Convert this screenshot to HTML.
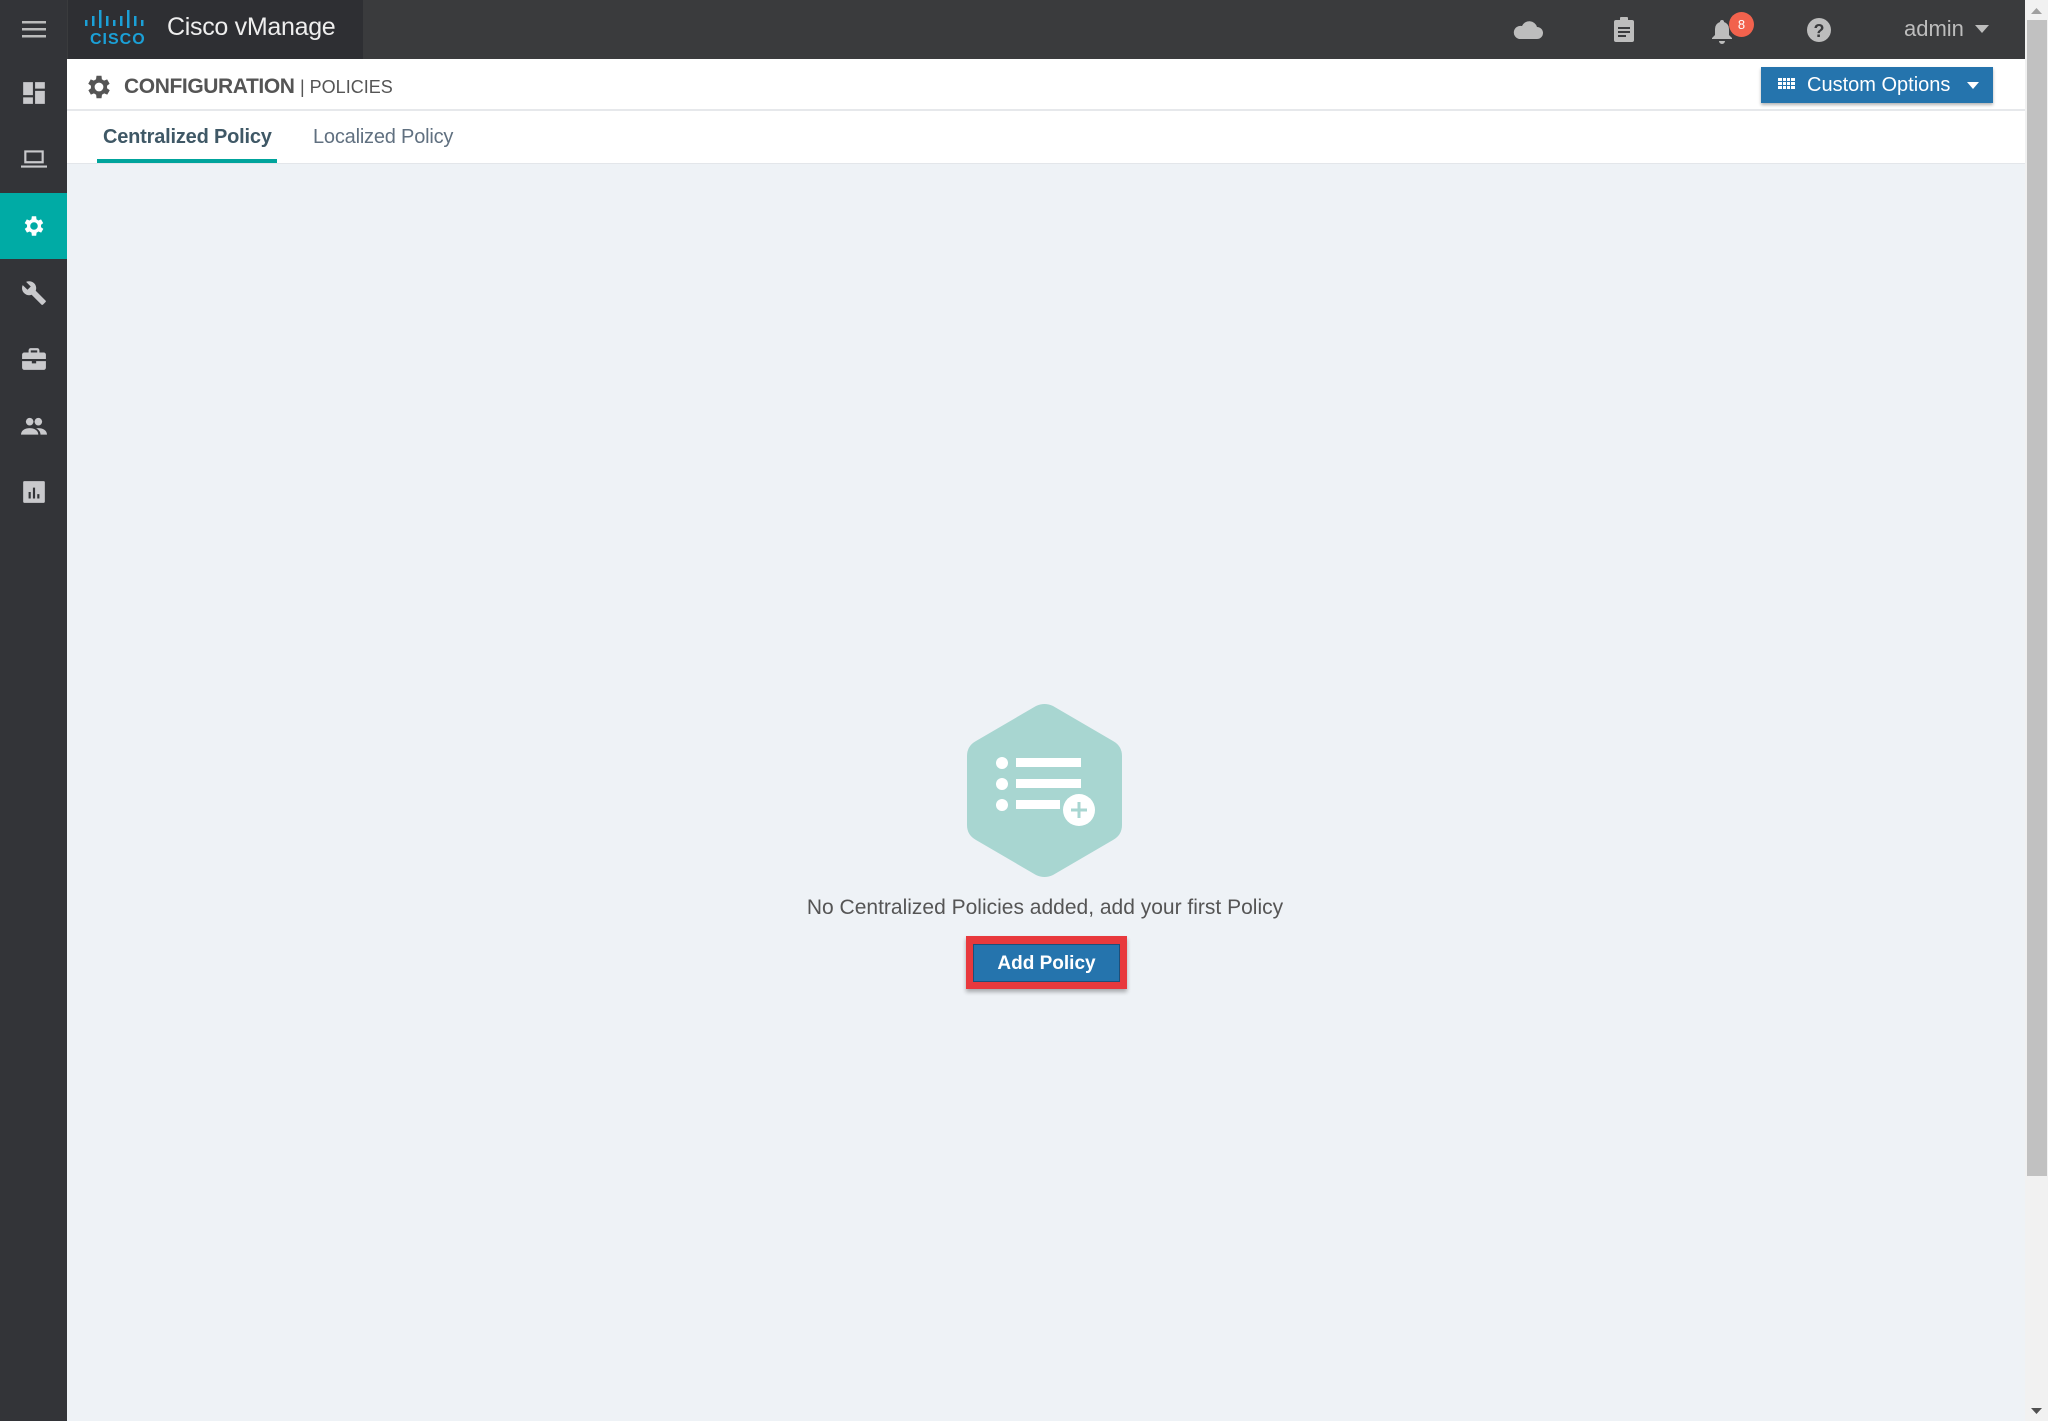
<!DOCTYPE html>
<html><head><meta charset="utf-8">
<style>
*{margin:0;padding:0;box-sizing:border-box}
html,body{width:2048px;height:1421px;overflow:hidden;background:#eef2f6;font-family:"Liberation Sans",sans-serif}
.top{position:absolute;left:0;top:0;width:2025px;height:59px;background:#3a3b3d}
.logo{position:absolute;left:68px;top:0;width:295px;height:59px;background:#2e2f33}
.side{position:absolute;left:0;top:59px;width:67px;height:1362px;background:#333438}
.ham{position:absolute;left:0;top:0;width:67px;height:59px;background:#333438}
.active{position:absolute;left:0;top:134px;width:67px;height:66px;background:#00aba5}
.sico{position:absolute;left:21px;width:26px;height:26px}
.hdr{position:absolute;left:67px;top:59px;width:1958px;height:52px;background:#fff;border-bottom:2px solid #e6e8eb}
.tabs{position:absolute;left:67px;top:111px;width:1958px;height:53px;background:#fff;border-bottom:1px solid #e3e6ea}
.title{position:absolute;left:124px;top:75px;font-size:21px;font-weight:bold;color:#555;letter-spacing:-0.4px}
.title span{font-weight:normal;font-size:18px;color:#555;letter-spacing:0}
.tab{position:absolute;top:126px;font-size:20px;color:#666;letter-spacing:-0.2px}
.btn{position:absolute;left:1761px;top:67px;width:232px;height:36px;background:#2574ad;color:#fff;font-size:20px;line-height:36px;box-shadow:0 2px 3px rgba(0,0,0,.3)}
.sb{position:absolute;left:2025px;top:0;width:23px;height:1421px;background:#f1f1f1}
.thumb{position:absolute;left:2027px;top:20px;width:20px;height:1156px;background:#c1c1c1}
.msg{position:absolute;left:0;width:2090px;top:896px;text-align:center;font-size:21px;color:#555}
.add{position:absolute;left:966px;top:936px;width:161px;height:53px;background:#e8393d;box-shadow:0 3px 4px rgba(0,0,0,.3)}
.add div{position:absolute;left:7px;top:8px;width:147px;height:38px;background:#2574ad;color:#fff;font-weight:bold;font-size:19px;text-align:center;line-height:38px;border:1px solid #1d4f7a}
</style></head><body>
<div class="top"></div>
<div class="logo"></div>
<div class="ham"><svg style="position:absolute;left:22px;top:20px" width="24" height="18"><rect y="1" width="24" height="2.5" fill="#bbb"/><rect y="8" width="24" height="2.5" fill="#bbb"/><rect y="15" width="24" height="2.5" fill="#bbb"/></svg></div>
<svg style="position:absolute;left:85px;top:10px" width="68" height="36">
<g fill="#1ba0d7"><rect x="0" y="10" width="2.5" height="6"/><rect x="7" y="6" width="2.5" height="10"/><rect x="14" y="0" width="2.5" height="18"/><rect x="21" y="6" width="2.5" height="10"/><rect x="28" y="10" width="2.5" height="6"/><rect x="35" y="6" width="2.5" height="10"/><rect x="42" y="0" width="2.5" height="18"/><rect x="49" y="6" width="2.5" height="10"/><rect x="56" y="10" width="2.5" height="6"/></g>
<text x="5" y="34" font-family="Liberation Sans" font-weight="bold" font-size="16" fill="#1ba0d7" letter-spacing="1">CISCO</text></svg>
<div style="position:absolute;left:167px;top:13px;font-size:25px;color:#eee;letter-spacing:-0.3px">Cisco vManage</div>
<svg style="position:absolute;left:1513px;top:20px" width="30" height="20"><path d="M6 19h18a6 6 0 0 0 0-12 8 8 0 0 0-15-1A6.5 6.5 0 0 0 6 19z" fill="#bdbdbd"/></svg>
<svg style="position:absolute;left:1613px;top:17px" width="22" height="26"><rect x="1" y="3" width="20" height="22" rx="2" fill="#bdbdbd"/><rect x="7" y="0" width="8" height="6" rx="1" fill="#bdbdbd"/><g fill="#3a3b3d"><rect x="5" y="10" width="12" height="2"/><rect x="5" y="14" width="12" height="2"/><rect x="5" y="18" width="8" height="2"/></g></svg>
<svg style="position:absolute;left:1711px;top:18px" width="22" height="26"><path d="M11 2a2 2 0 0 1 2 2 7 7 0 0 1 5 7v6l3 3v1H1v-1l3-3v-6a7 7 0 0 1 5-7 2 2 0 0 1 2-2zM8 23h6a3 3 0 0 1-6 0z" fill="#bdbdbd"/></svg>
<div style="position:absolute;left:1729px;top:12px;width:25px;height:25px;border-radius:50%;background:#f2624d;color:#fff;font-size:13px;text-align:center;line-height:25px">8</div>
<svg style="position:absolute;left:1807px;top:18px" width="24" height="24"><circle cx="12" cy="12" r="12" fill="#bdbdbd"/><text x="12" y="19" text-anchor="middle" font-family="Liberation Sans" font-weight="bold" font-size="18" fill="#3a3b3d">?</text></svg>
<div style="position:absolute;left:1904px;top:16px;font-size:22px;color:#bdbdbd">admin</div>
<svg style="position:absolute;left:1975px;top:25px" width="14" height="8"><path d="M0 0h14L7 8z" fill="#bdbdbd"/></svg>
<div class="side">
<div class="active"></div>
<svg class="sico" style="top:21px" viewBox="0 0 24 24"><path d="M2 2h9v12H2zM13 2h9v6h-9zM13 10h9v12h-9zM2 16h9v6H2z" fill="#c9c9cc"/></svg>
<svg class="sico" style="top:87px" viewBox="0 0 24 24"><path d="M3 4h18v12H3zM5 6v8h14V6zM0 18h24v2H0z" fill="#c9c9cc" fill-rule="evenodd"/></svg>
<svg class="sico" style="top:154px" viewBox="0 0 24 24"><path d="M19.4 13a7.5 7.5 0 0 0 0-2l2.1-1.6-2-3.5-2.5 1a7 7 0 0 0-1.7-1L15 3h-4l-.4 2.9a7 7 0 0 0-1.7 1l-2.5-1-2 3.5L6.6 11a7.5 7.5 0 0 0 0 2l-2.1 1.6 2 3.5 2.5-1a7 7 0 0 0 1.7 1L11 21h4l.4-2.9a7 7 0 0 0 1.7-1l2.5 1 2-3.5zM13 15.5a3.5 3.5 0 1 1 0-7 3.5 3.5 0 0 1 0 7z" transform="translate(-1 0)" fill="#fff" fill-rule="evenodd"/></svg>
<svg class="sico" style="top:221px" viewBox="0 0 24 24"><path d="M22.7 19l-9.1-9.1c.9-2.3.4-5-1.5-6.9-2-2-5-2.4-7.4-1.3L9 6 6 9 1.6 4.7C.4 7.1.9 10.1 2.9 12.1c1.9 1.9 4.6 2.4 6.9 1.5l9.1 9.1c.4.4 1 .4 1.4 0l2.3-2.3c.5-.4.5-1.1.1-1.4z" fill="#c9c9cc"/></svg>
<svg class="sico" style="top:287px" viewBox="0 0 24 24"><path d="M9 2h6a2 2 0 0 1 2 2v2h4a2 2 0 0 1 2 2v4H1V8a2 2 0 0 1 2-2h4V4a2 2 0 0 1 2-2zm0 2v2h6V4zM1 14h9v2h4v-2h9v6a2 2 0 0 1-2 2H3a2 2 0 0 1-2-2z" fill="#c9c9cc"/></svg>
<svg class="sico" style="top:354px" viewBox="0 0 24 24"><circle cx="8" cy="8" r="3.5" fill="#c9c9cc"/><circle cx="16" cy="8" r="3.5" fill="#c9c9cc"/><path d="M0 20c0-4 4-6 8-6s8 2 8 6zM14 14.3c1-.2 1.5-.3 2-.3 4 0 8 2 8 6h-6c0-2-1-4.5-4-5.7z" fill="#c9c9cc"/></svg>
<svg class="sico" style="top:420px" viewBox="0 0 24 24"><path d="M3 2h18a1 1 0 0 1 1 1v18a1 1 0 0 1-1 1H3a1 1 0 0 1-1-1V3a1 1 0 0 1 1-1zm4 10v6h2v-6zm4-4v10h2V8zm4 6v4h2v-4z" fill="#c9c9cc" fill-rule="evenodd"/></svg>
</div>
<div class="hdr"></div>
<svg style="position:absolute;left:84px;top:72px" width="30" height="30" viewBox="0 0 24 24"><path d="M19.4 13a7.5 7.5 0 0 0 0-2l2.1-1.6-2-3.5-2.5 1a7 7 0 0 0-1.7-1L15 3h-4l-.4 2.9a7 7 0 0 0-1.7 1l-2.5-1-2 3.5L6.6 11a7.5 7.5 0 0 0 0 2l-2.1 1.6 2 3.5 2.5-1a7 7 0 0 0 1.7 1L11 21h4l.4-2.9a7 7 0 0 0 1.7-1l2.5 1 2-3.5zM13 15.5a3.5 3.5 0 1 1 0-7 3.5 3.5 0 0 1 0 7z" transform="translate(-1 0)" fill="#555" fill-rule="evenodd"/></svg>
<div class="title">CONFIGURATION <span>| POLICIES</span></div>
<div class="btn"><svg style="position:absolute;left:17px;top:11px" width="18" height="14"><g fill="#fff"><rect x="0" y="0" width="4" height="3"/><rect x="5" y="0" width="3" height="3"/><rect x="9" y="0" width="3" height="3"/><rect x="13" y="0" width="4" height="3"/><rect x="0" y="4" width="4" height="3"/><rect x="5" y="4" width="3" height="3"/><rect x="9" y="4" width="3" height="3"/><rect x="13" y="4" width="4" height="3"/><rect x="0" y="8" width="4" height="3"/><rect x="5" y="8" width="3" height="3"/><rect x="9" y="8" width="3" height="3"/><rect x="13" y="8" width="4" height="3"/></g></svg><span style="position:absolute;left:46px">Custom Options</span><svg style="position:absolute;left:206px;top:15px" width="12" height="7"><path d="M0 0h12L6 7z" fill="#fff"/></svg></div>
<div class="tabs"></div>
<div class="tab" style="left:103px;font-weight:bold;color:#3f5866">Centralized Policy</div>
<div class="tab" style="left:313px;color:#607080">Localized Policy</div>
<div style="position:absolute;left:97px;top:159px;width:180px;height:4px;background:#00a49c"></div>
<svg style="position:absolute;left:966px;top:703px" width="157" height="175" viewBox="0 0 157 175">
<path d="M70 3Q78.5-1 87 3L147 38Q156 43 156 53V122Q156 132 147 137L87 172Q78.5 176 70 172L10 137Q1 132 1 122V53Q1 43 10 38Z" fill="#a8d6d1"/>
<g fill="#fff"><circle cx="36" cy="60" r="6"/><circle cx="36" cy="81" r="6"/><circle cx="36" cy="102" r="6"/>
<rect x="50" y="55" width="65" height="9"/><rect x="50" y="76" width="65" height="9"/><rect x="50" y="97" width="44" height="9"/>
<circle cx="113" cy="107" r="16"/></g>
<path d="M113 99v16M105 107h16" stroke="#a8d6d1" stroke-width="3"/>
</svg>
<div class="msg">No Centralized Policies added, add your first Policy</div>
<div class="add"><div>Add Policy</div></div>
<div class="sb"></div>
<div class="thumb"></div>
<svg style="position:absolute;left:2031px;top:8px" width="11" height="6"><path d="M0 6h11L5.5 0z" fill="#a0a0a0"/></svg>
<svg style="position:absolute;left:2031px;top:1408px" width="11" height="6"><path d="M0 0h11L5.5 6z" fill="#505050"/></svg>
</body></html>
